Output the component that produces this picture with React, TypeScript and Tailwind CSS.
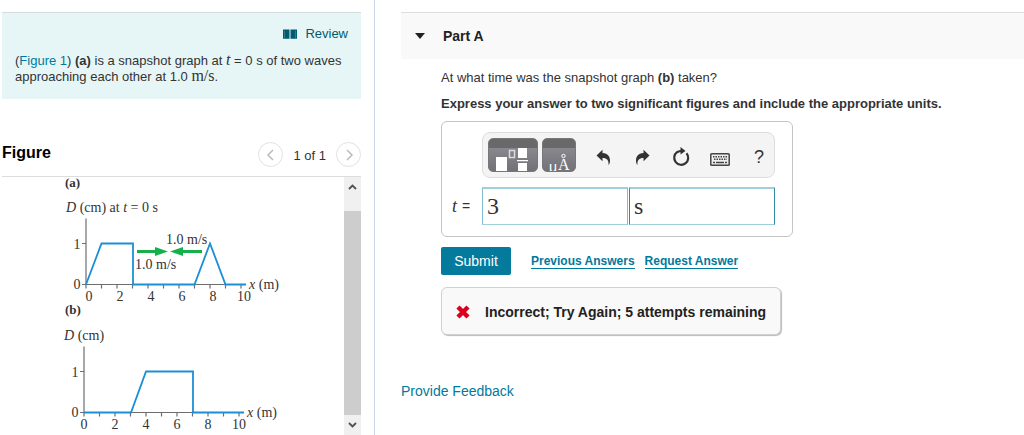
import { useState } from "react";

const serif = "font-['Liberation_Serif',serif]";

function Review() {
  return (
    <section className="mt-3 border-t border-[#d5dcdc] bg-[#e6f6f7] px-[13px] pt-[11px] pb-[14px]">
      <div className="flex justify-end">
        <a href="#review" className="flex items-center gap-2 text-[13px] leading-5 text-[#005a70]">
          <svg width="14" height="11" viewBox="0 0 14 11" aria-hidden="true">
            <path fill="#005a70" d="M0 .5H6.500V9.700H0ZM7.500 .5H14V9.700H7.500Z" />
            <path d="M1.500 1.500V9M12.500 1.500V9" stroke="#5e9aa8" strokeWidth=".5" />
          </svg>
          Review
        </a>
      </div>
      <p className="mt-[9px] text-[13px] leading-4 text-[#333]">
        (<a href="#figure" className="text-[#007a9c]">Figure 1</a>) <b>(a)</b> is a snapshot graph at{" "}
        <i className={`${serif} text-[16px] leading-3`}>t</i> = 0 s of two waves approaching each other at 1.0{" "}
        <span className={`${serif} text-[16px] leading-3`}>m/s</span>.
      </p>
    </section>
  );
}

type GraphProps = { x: number; y: number; points: string; shift: number };

function Graph({ x, y, points, shift }: GraphProps) {
  const ticks = [1, 2, 3, 4, 5, 6, 7, 8, 9, 10];
  return (
    <g transform={`translate(${x} ${y})`}>
      <g stroke="#6d6e71" strokeWidth="1.200" fill="none">
        <path d="M0-66V4M-4 0H160M-4-41H0" />
        {ticks.map((n) => (
          <path key={n} d={`M${n * 15.5} 0V4`} />
        ))}
      </g>
      <polyline points={points} fill="none" stroke="#1b8fd6" strokeWidth="1.800" />
      <g fontSize="14" textAnchor="middle">
        <text x="-9" y="-36">1</text>
        <text x="-9" y="4">0</text>
        {[0, 2, 4, 6, 8, 10].map((n) => (
          <text key={n} x={n * 15.5 + shift} y="16">{n}</text>
        ))}
      </g>
      <text x="163" y="4" fontSize="14">
        <tspan fontStyle="italic">x</tspan> (m)
      </text>
    </g>
  );
}

function FigureDrawing() {
  return (
    <svg
      width="342"
      height="258"
      viewBox="2 177 342 258"
      className={`${serif} block shrink-0`}
      fill="#333"
      role="img"
      aria-label="Snapshot graphs a and b"
    >
      <text x="65" y="187" fontSize="13" fontWeight="bold">(a)</text>
      <text x="66" y="212" fontSize="14">
        <tspan fontStyle="italic">D</tspan> (cm) at <tspan fontStyle="italic">t</tspan> = 0 s
      </text>
      <Graph x={86} y={284.5} shift={3} points="0,0 15.5,-41 47,-41 47,0 108.5,0 124,-41 139.5,0 160,0" />
      <g fill="#16b04b" stroke="#16b04b">
        <path d="M137 251.500H156M182 251.500H202" strokeWidth="3" />
        <path stroke="none" d="M155 247 168 251.500 155 256ZM183 247 170 251.500 183 256Z" />
      </g>
      <text x="166" y="244" fontSize="14">1.0 m/s</text>
      <text x="135" y="269" fontSize="14">1.0 m/s</text>
      <text x="65" y="314" fontSize="13" fontWeight="bold">(b)</text>
      <text x="64" y="340" fontSize="14">
        <tspan fontStyle="italic">D</tspan> (cm)
      </text>
      <Graph x={84} y={412.5} shift={0} points="0,0 47,0 62,-41 109,-41 109,0 160,0" />
    </svg>
  );
}

function Chevron({ d }: { d: string }) {
  return (
    <svg width="12" height="14" viewBox="0 0 12 14" fill="none" stroke="currentColor" strokeWidth="1.500" aria-hidden="true">
      <path d={d} />
    </svg>
  );
}

function FigurePanel() {
  const round = "flex size-[25px] items-center justify-center rounded-full border border-[#e2e2e2] text-[#bbb]";
  return (
    <section id="figure" className="mt-[43px] flex min-h-0 flex-1 flex-col">
      <header className="flex h-[34px] items-start justify-between">
        <h2 className="pt-px text-base leading-5 font-bold text-black">Figure</h2>
        <div className="flex items-center text-[13px] text-[#333]">
          <button aria-label="Previous figure" className={round}><Chevron d="M8 2 3 7 8 12" /></button>
          <span className="px-[10px] pt-[3px]">1 of 1</span>
          <button aria-label="Next figure" className={round}><Chevron d="M4 2 9 7 4 12" /></button>
        </div>
      </header>
      <div className="flex min-h-0 flex-1 overflow-hidden border-t border-[#ddd]">
        <div className="min-w-0 flex-1 overflow-hidden"><FigureDrawing /></div>
        <div className="flex w-[17px] flex-col bg-[#f0f0f0] text-[#505050]">
          <button aria-label="Scroll up" className="flex h-5 items-center justify-center">
            <svg width="9" height="6" viewBox="0 0 9 6" fill="none" stroke="currentColor" strokeWidth="1.800"><path d="M1 5 4.500 1.500 8 5" /></svg>
          </button>
          <div className="mt-[14px] flex-1 bg-[#cdcdcd]" />
          <button aria-label="Scroll down" className="flex h-5 items-center justify-center">
            <svg width="9" height="6" viewBox="0 0 9 6" fill="none" stroke="currentColor" strokeWidth="1.800"><path d="M1 1 4.500 4.500 8 1" /></svg>
          </button>
        </div>
      </div>
    </section>
  );
}

function Toolbar() {
  const block = "h-[34px] overflow-hidden rounded-[5px] border border-[#777] bg-linear-to-b from-[#929199] to-[#727176]";
  return (
    <div className="flex h-[46px] items-center rounded-lg border border-[#ddd] bg-[#f4f4f4] px-[5px] text-[#333]">
      <button aria-label="Templates" className={`${block} w-[50px]`}>
        <svg width="48" height="32" viewBox="0 0 48 32">
          <path fill="#69696b" d="M0 0H48V9H0Z" />
          <path fill="#fff" d="M7 18H18V32H7ZM29 9H38V19H29ZM29 24H38V32H29ZM28 21H39V22.300H28Z" />
          <path fill="none" stroke="#ddd" strokeWidth="1.500" d="M20.500 11.500H25.500V18.500H20.500Z" />
        </svg>
      </button>
      <button aria-label="Units" className={`${block} ml-1 w-[34px]`}>
        <svg width="32" height="32" viewBox="0 0 32 32" fill="#fff">
          <path fill="#69696b" d="M0 0H32V9H0Z" />
          <text x="6" y="33" fontSize="14" className="font-['Liberation_Sans',sans-serif]">μ</text>
          <text x="15" y="31" fontSize="16" className={serif}>A</text>
          <circle cx="20.500" cy="17" r="1.700" fill="none" stroke="#fff" strokeWidth="1" />
        </svg>
      </button>
      <button aria-label="Undo" className="mt-1 ml-5">
        <svg width="15" height="17" viewBox="0 0 15 17" fill="currentColor">
          <path d="M.5 6.500 6.500.8V4C12 4 14 8 14 11.500 14 13.500 13.500 15 12.500 16 13 11.500 11 9 6.500 9V12.300Z" />
        </svg>
      </button>
      <button aria-label="Redo" className="mt-1 ml-6">
        <svg width="15" height="17" viewBox="0 0 15 17" fill="currentColor">
          <path d="M14.500 6.500 8.500.8V4C3 4 1 8 1 11.500 1 13.500 1.500 15 2.500 16 2 11.500 4 9 8.500 9V12.300Z" />
        </svg>
      </button>
      <button aria-label="Reset" className="mt-1 ml-[22px]">
        <svg width="18" height="20" viewBox="0 0 18 20">
          <path fill="none" stroke="currentColor" strokeWidth="2.200" d="M5 5.200A7 7 0 1 0 14.500 6.200M5 5.200Q7 4 10 4" />
          <path fill="currentColor" d="M8.500 0 13.500 4 8.500 7.500Z" />
        </svg>
      </button>
      <button aria-label="Keyboard" className="mt-2 ml-5">
        <svg width="20" height="13" viewBox="0 0 20 13">
          <rect x=".8" y=".8" width="18.400" height="11.400" rx=".8" fill="#eee" stroke="#444" strokeWidth="1.500" />
          <path d="M3 3.800H17.500M4 6.300H17" stroke="#444" strokeWidth="1.500" strokeDasharray="1.500 1" />
          <path d="M3 9.500H5M6 9.500H14M15 9.500H17" stroke="#444" strokeWidth="1.500" />
        </svg>
      </button>
      <button aria-label="Help" className="mt-1 ml-6 text-lg leading-5">?</button>
    </div>
  );
}

function Answer() {
  const [value, setValue] = useState("3");
  const [units, setUnits] = useState("s");
  const field = `${serif} h-[38px] w-[146px] border border-t-2 border-y-[#9fd0dc] bg-white px-1 text-2xl text-[#333] outline-none`;
  return (
    <div className="mt-[9px] flex w-fit items-end rounded-md border border-[#c4c4c4] pt-[10px] pr-[17px] pb-[11px] pl-[10px]">
      <label htmlFor="answer-value" className="flex h-[38px] w-[30px] items-center gap-[5px] text-sm text-[#333]">
        <i className={`${serif} text-lg`}>t</i> =
      </label>
      <div className="flex flex-col gap-[9px]">
        <Toolbar />
        <div className="flex gap-px">
          <input id="answer-value" className={`${field} border-x-[#7fbccd]`} value={value} onChange={(e) => setValue(e.target.value)} />
          <input aria-label="Units" className={`${field} border-x-[#2f8ba6]`} value={units} onChange={(e) => setUnits(e.target.value)} />
        </div>
      </div>
    </div>
  );
}

export default function App() {
  return (
    <div className="flex h-screen overflow-hidden bg-white font-['Liberation_Sans',Arial,sans-serif] text-[#333]">
      <aside className="flex w-[375px] shrink-0 flex-col border-r border-[#c9d7ea] pr-[13px] pl-[2px]">
        <Review />
        <FigurePanel />
      </aside>
      <main className="min-w-0 flex-1 pt-3 pl-[26px]">
        <h2 className="border-t border-[#ddd] bg-[#f9f9f9]">
          <button className="flex h-[46px] w-full items-center gap-[18px] pl-[14px] text-sm font-bold text-[#222]">
            <svg width="10" height="6" viewBox="0 0 10 6" fill="currentColor" aria-hidden="true"><path d="M0 0H10L5 6Z" /></svg>
            Part A
          </button>
        </h2>
        <div className="pl-10">
          <p className="mt-[11px] text-[13px] leading-4">
            At what time was the snapshot graph <b>(b)</b> taken?
          </p>
          <p className="mt-[10px] text-[13px] leading-4 font-bold">
            Express your answer to two significant figures and include the appropriate units.
          </p>
          <Answer />
          <div className="mt-[10px] flex items-center text-xs font-bold text-[#007a9c]">
            <button className="h-7 w-[70px] rounded-xs bg-[#047a9c] text-sm font-normal text-white">Submit</button>
            <a href="#previous" className="ml-5 border-b border-current leading-[14px]">Previous Answers</a>
            <a href="#request" className="ml-[10px] border-b border-current leading-[14px]">Request Answer</a>
          </div>
          <div role="status" className="mt-3 flex h-12 w-fit items-center gap-[15px] rounded-md border border-[#d0d0d0] bg-[#f9f9f9] px-[14px] pt-px text-sm font-bold text-[#222] shadow-[1px_1px_1px_#bbb]">
            <svg width="14" height="14" viewBox="0 0 14 14" aria-hidden="true">
              <path d="M2 2 12 12M12 2 2 12" stroke="#db0020" strokeWidth="4.500" />
            </svg>
            Incorrect; Try Again; 5 attempts remaining
          </div>
        </div>
        <a href="#feedback" className="mt-12 block w-fit text-sm leading-4 text-[#007a9c]">Provide Feedback</a>
      </main>
    </div>
  );
}
